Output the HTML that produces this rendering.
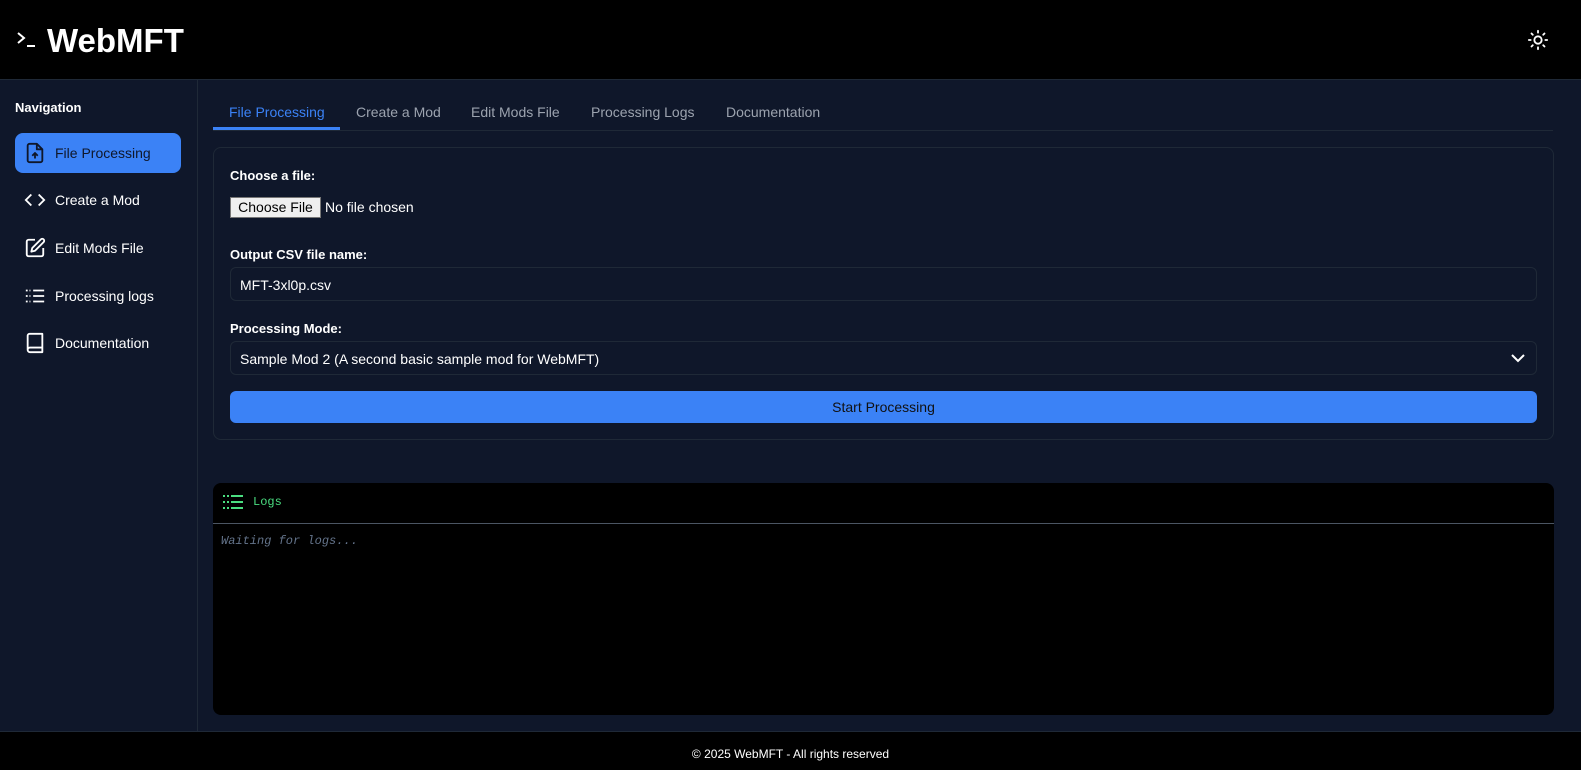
<!DOCTYPE html>
<html><head><style>
*{box-sizing:border-box;margin:0;padding:0}
body{width:1581px;height:770px;background:#0f172a;font-family:"Liberation Sans",Arial,sans-serif;color:#fff;position:relative;overflow:hidden}
.hdr{position:absolute;left:0;top:0;width:1581px;height:80px;background:#000;border-bottom:1px solid #1f2937}
.logo{position:absolute;left:47px;top:22px;font-size:33px;font-weight:bold}
.side{position:absolute;left:0;top:80px;width:198px;height:651px;border-right:1px solid #1f2937}
.nav-t{position:absolute;left:15px;top:100px;font-size:13px;font-weight:bold}
.ni{position:absolute;left:15px;width:166px;height:40px;border-radius:8px;font-size:14px;display:flex;align-items:center;padding-left:40px}
.ni svg{position:absolute;left:9px;top:9px}
.act{background:#3b82f6;color:#0f172a}
.tabs{position:absolute;left:213px;top:98px;width:1340px;height:33px;border-bottom:1px solid #1f2937;font-size:14px;color:#9ca3af}
.tabs span{position:absolute;top:6px}
.card{position:absolute;left:213px;top:147px;width:1341px;height:293px;border:1px solid #1f2937;border-radius:8px}
.lbl{position:absolute;left:230px;font-size:13px;font-weight:bold}
.inp{position:absolute;left:230px;width:1307px;height:34px;border:1px solid #1f2937;border-radius:6px;font-size:14px;padding:9px 9px}
.btn{position:absolute;left:230px;top:391px;width:1307px;height:32px;background:#3b82f6;border-radius:6px;color:#111;font-size:14px;text-align:center;line-height:32px}
.logs{position:absolute;left:213px;top:483px;width:1341px;height:232px;background:#000;border-radius:8px}
.foot{position:absolute;left:0;top:731px;width:1581px;height:39px;background:#000;border-top:1px solid #1f2937;font-size:12px;text-align:center;padding-top:15px}
</style></head><body>
<div class="hdr">
<svg style="position:absolute;left:17px;top:32px" width="20" height="16" viewBox="0 0 20 16"><path d="M1 1l6 5-6 5M10 14h8" stroke="#fff" stroke-width="2" fill="none"/></svg>
<div class="logo">WebMFT</div>
<svg style="position:absolute;left:1527px;top:29px" width="22" height="22" viewBox="0 0 24 24" fill="none" stroke="#fff" stroke-width="2" stroke-linecap="round"><circle cx="12" cy="12" r="4"/><path d="M12 2v2M12 20v2M4.9 4.9l1.4 1.4M17.7 17.7l1.4 1.4M2 12h2M20 12h2M6.3 17.7l-1.4 1.4M19.1 4.9l-1.4 1.4"/></svg>
</div>
<div class="side"></div>
<div class="nav-t">Navigation</div>
<div class="ni act" style="top:133px"><svg width="22" height="22" viewBox="0 0 24 24" fill="none" stroke="#0f172a" stroke-width="2" stroke-linejoin="round"><path d="M14 2H6a2 2 0 0 0-2 2v16a2 2 0 0 0 2 2h12a2 2 0 0 0 2-2V8z"/><path d="M14 2v6h6M12 18v-6M9 15l3-3 3 3"/></svg>File Processing</div>
<div class="ni" style="top:180px"><svg width="22" height="22" viewBox="0 0 24 24" fill="none" stroke="#fff" stroke-width="2"><path d="M8 6l-6 6 6 6M16 6l6 6-6 6"/></svg>Create a Mod</div>
<div class="ni" style="top:228px"><svg width="22" height="22" viewBox="0 0 24 24" fill="none" stroke="#fff" stroke-width="2" stroke-linejoin="round"><path d="M12 3H5a2 2 0 0 0-2 2v14a2 2 0 0 0 2 2h14a2 2 0 0 0 2-2v-7"/><path d="M18.4 2.6a2.1 2.1 0 0 1 3 3L12 15l-4 1 1-4z"/></svg>Edit Mods File</div>
<div class="ni" style="top:276px"><svg width="22" height="22" viewBox="0 0 24 24" fill="none" stroke="#fff" stroke-width="2"><path d="M2 6h2M6 6h1M10 6h12M2 12h2M6 12h1M10 12h12M2 18h2M6 18h1M10 18h12"/></svg>Processing logs</div>
<div class="ni" style="top:323px"><svg width="22" height="22" viewBox="0 0 24 24" fill="none" stroke="#fff" stroke-width="2" stroke-linejoin="round"><path d="M4 19.5V4a2 2 0 0 1 2-2h14v20H6.5A2.5 2.5 0 0 1 4 19.5zM4 19.5A2.5 2.5 0 0 1 6.5 17H20"/></svg>Documentation</div>
<div class="tabs">
<span style="left:16px;color:#3b82f6">File Processing</span>
<div style="position:absolute;left:0;top:29px;width:127px;height:3px;background:#3b82f6"></div>
<span style="left:143px">Create a Mod</span>
<span style="left:258px">Edit Mods File</span>
<span style="left:378px">Processing Logs</span>
<span style="left:513px">Documentation</span>
</div>
<div class="card"></div>
<div class="lbl" style="top:168px">Choose a file:</div>
<div style="position:absolute;left:230px;top:197px;width:91px;height:21px;background:#efefef;border:1px solid #767676;color:#000;font-size:14px;text-align:center;line-height:19px">Choose File</div>
<div style="position:absolute;left:325px;top:199px;font-size:14px">No file chosen</div>
<div class="lbl" style="top:247px">Output CSV file name:</div>
<div class="inp" style="top:267px">MFT-3xl0p.csv</div>
<div class="lbl" style="top:321px">Processing Mode:</div>
<div class="inp" style="top:341px">Sample Mod 2 (A second basic sample mod for WebMFT)
<svg style="position:absolute;right:10px;top:10px" width="16" height="12" viewBox="0 0 16 12"><path d="M2 3l6 6 6-6" stroke="#fff" stroke-width="2" fill="none"/></svg></div>
<div class="btn">Start Processing</div>
<div class="logs">
<svg style="position:absolute;left:9px;top:10px" width="22" height="18" viewBox="0 0 22 18" fill="none" stroke="#4ade80" stroke-width="2"><path d="M1 3h2M5 3h2M9 3h12M1 9h2M5 9h2M9 9h12M1 15h2M5 15h2M9 15h12"/></svg>
<div style="position:absolute;left:40px;top:12px;font-family:'Liberation Mono',monospace;font-size:12px;color:#4ade80">Logs</div>
<div style="position:absolute;left:0;top:40px;width:100%;height:1px;background:#4b5563"></div>
<div style="position:absolute;left:8px;top:51px;font-family:'Liberation Mono',monospace;font-size:12px;font-style:italic;color:#64748b">Waiting for logs...</div>
</div>
<div class="foot">© 2025 WebMFT - All rights reserved</div>
</body></html>
